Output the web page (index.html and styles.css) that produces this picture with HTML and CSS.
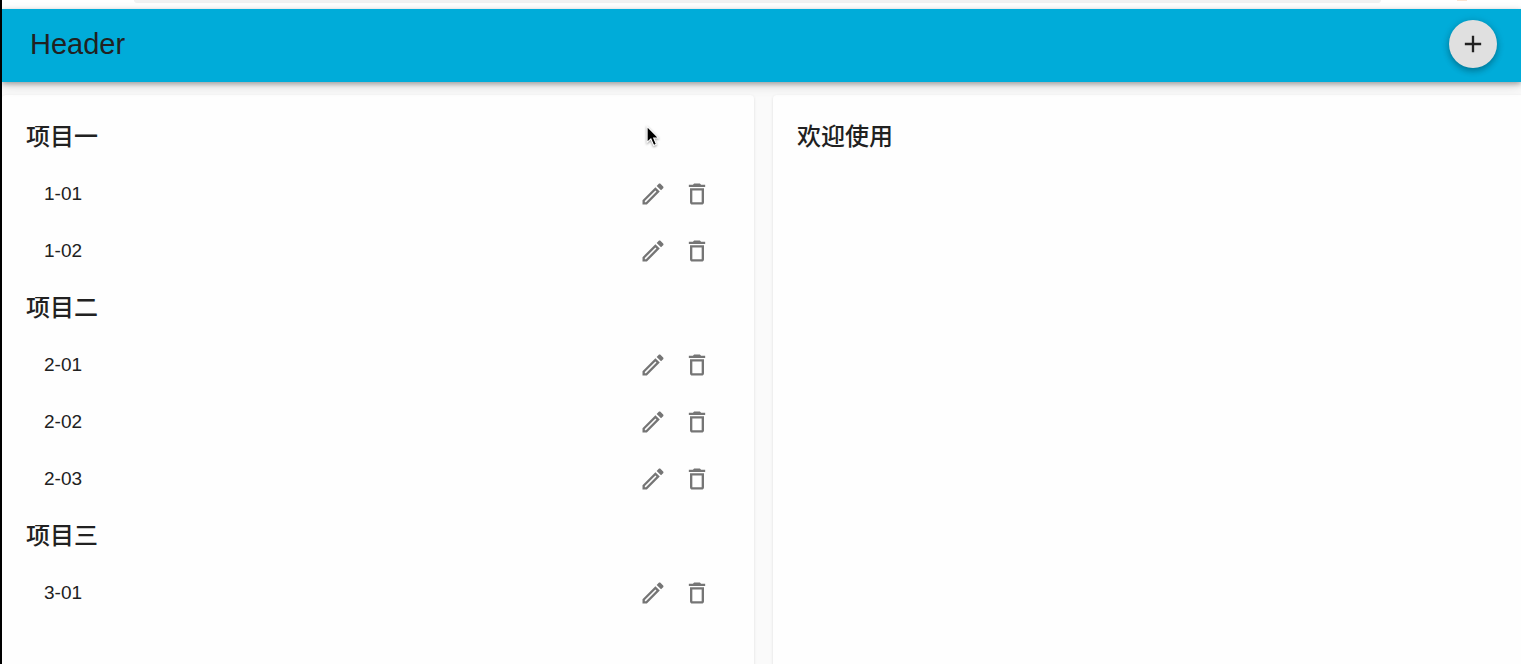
FILE: index.html
```html
<!DOCTYPE html>
<html lang="zh-CN">
<head>
  <meta charset="utf-8">
  <title>Header</title>
  <link rel="stylesheet" href="styles.css">
</head>
<body>
  <svg class="sprite">
    <symbol id="edit" viewBox="0 0 24 24">
      <path d="M14.06 9.02l.92.92L5.92 19H5v-.92l9.06-9.06M17.66 3c-.25 0-.51.1-.7.29l-1.83 1.83 3.75 3.75 1.83-1.83c.39-.39.39-1.02 0-1.41l-2.34-2.34c-.2-.2-.45-.29-.71-.29zm-3.6 3.19L3 17.25V21h3.75L17.81 9.94l-3.75-3.75z"/>
    </symbol>
    <symbol id="delete" viewBox="0 0 24 24">
      <path d="M6 19c0 1.100.9 2 2 2h8c1.100 0 2-.9 2-2V7H6v12zM8 9h8v10H8V9zm7.500-5l-1-1h-5l-1 1H5v2h14V4z"/>
    </symbol>
    <symbol id="add" viewBox="0 0 24 24">
      <path d="M19 13h-6v6h-2v-6H5v-2h6V5h2v6h6v2z"/>
    </symbol>
  </svg>

  <div class="browser-bar">
    <div class="address"></div>
    <div class="avatar"></div>
  </div>

  <header class="app-bar">
    <h1>Header</h1>
    <button type="button" class="fab" aria-label="add"><svg><use href="#add"/></svg></button>
  </header>

  <main class="container">
    <section class="paper">
      <h2>项目一</h2>
      <ul>
        <li>
          <span>1-01</span>
          <button type="button" aria-label="edit"><svg><use href="#edit"/></svg></button>
          <button type="button" aria-label="delete"><svg><use href="#delete"/></svg></button>
        </li>
        <li>
          <span>1-02</span>
          <button type="button" aria-label="edit"><svg><use href="#edit"/></svg></button>
          <button type="button" aria-label="delete"><svg><use href="#delete"/></svg></button>
        </li>
      </ul>
      <h2>项目二</h2>
      <ul>
        <li>
          <span>2-01</span>
          <button type="button" aria-label="edit"><svg><use href="#edit"/></svg></button>
          <button type="button" aria-label="delete"><svg><use href="#delete"/></svg></button>
        </li>
        <li>
          <span>2-02</span>
          <button type="button" aria-label="edit"><svg><use href="#edit"/></svg></button>
          <button type="button" aria-label="delete"><svg><use href="#delete"/></svg></button>
        </li>
        <li>
          <span>2-03</span>
          <button type="button" aria-label="edit"><svg><use href="#edit"/></svg></button>
          <button type="button" aria-label="delete"><svg><use href="#delete"/></svg></button>
        </li>
      </ul>
      <h2>项目三</h2>
      <ul>
        <li>
          <span>3-01</span>
          <button type="button" aria-label="edit"><svg><use href="#edit"/></svg></button>
          <button type="button" aria-label="delete"><svg><use href="#delete"/></svg></button>
        </li>
      </ul>
    </section>
    <section class="paper">
      <h2>欢迎使用</h2>
    </section>
  </main>

  <svg class="cursor" viewBox="0 0 12 20">
    <path d="M1 1v15l3.500-3.300 2.600 6 2.500-1.100-2.500-5.800H11.500z"/>
  </svg>
</body>
</html>
```
FILE: styles.css
```css
* {
  box-sizing: border-box;
}

body {
  display: flex;
  flex-direction: column;
  height: 100vh;
  margin: 0;
  overflow: hidden;
  border-left: 2px solid #000;
  background: #fafafa;
  color: #212121;
  font-family: "Liberation Sans", "Noto Sans CJK SC", sans-serif;
}

h1, h2, ul {
  margin: 0;
  padding: 0;
}

button {
  display: flex;
  align-items: center;
  justify-content: center;
  padding: 0;
  border: none;
  border-radius: 50%;
  background: none;
  color: #757575;
  cursor: pointer;
}

svg {
  width: 28px;
  height: 28px;
  fill: currentColor;
}

.sprite {
  display: none;
}

.browser-bar {
  display: flex;
  align-items: flex-start;
  flex: none;
  height: 9px;
  padding: 0 54px 0 132px;
  background: #fff;
}

.address {
  flex: 1;
  height: 3px;
  margin-right: 76px;
  border-radius: 0 0 12px 12px;
  background: #f1f1f1;
}

.avatar {
  width: 10px;
  height: 1px;
  background: #fbe3d0;
}

.app-bar {
  position: relative;
  display: flex;
  align-items: center;
  justify-content: space-between;
  flex: none;
  height: 73px;
  padding: 0 24px 3px 28px;
  background: #00acd9;
  box-shadow: 0 2px 5px rgba(0, 0, 0, 0.3), 0 4px 12px rgba(0, 0, 0, 0.12);
}

h1 {
  font-size: 29px;
  font-weight: 400;
  line-height: 32px;
}

.fab {
  width: 48px;
  height: 48px;
  background: #e0e0e0;
  color: #212121;
  box-shadow: 0 3px 6px rgba(0, 0, 0, 0.25), 0 1px 10px rgba(0, 0, 0, 0.12);
}

/* the grid runs slightly past the window on the right and at the bottom */
.container {
  display: grid;
  grid-template-columns: 1fr 1fr;
  gap: 19px;
  flex: 1;
  margin: 0 -4px -8px 0;
  padding-top: 13px;
}

.paper {
  padding: 13px 24px;
  border-radius: 4px;
  background: #fefefe;
  box-shadow: 0 1px 3px rgba(0, 0, 0, 0.12);
}

h2 {
  font-size: 24px;
  font-weight: 500;
  line-height: 57px;
}

li {
  display: flex;
  align-items: center;
  gap: 16px;
  height: 57px;
  padding: 0 19px 0 18px;
  font-size: 19px;
}

li span {
  flex: 1;
}

.cursor {
  position: absolute;
  top: 125px;
  left: 646px;
  width: 13px;
  height: 22px;
  fill: #000;
  stroke: #fff;
  filter: drop-shadow(0 1px 1px rgba(0, 0, 0, 0.4));
}
```
